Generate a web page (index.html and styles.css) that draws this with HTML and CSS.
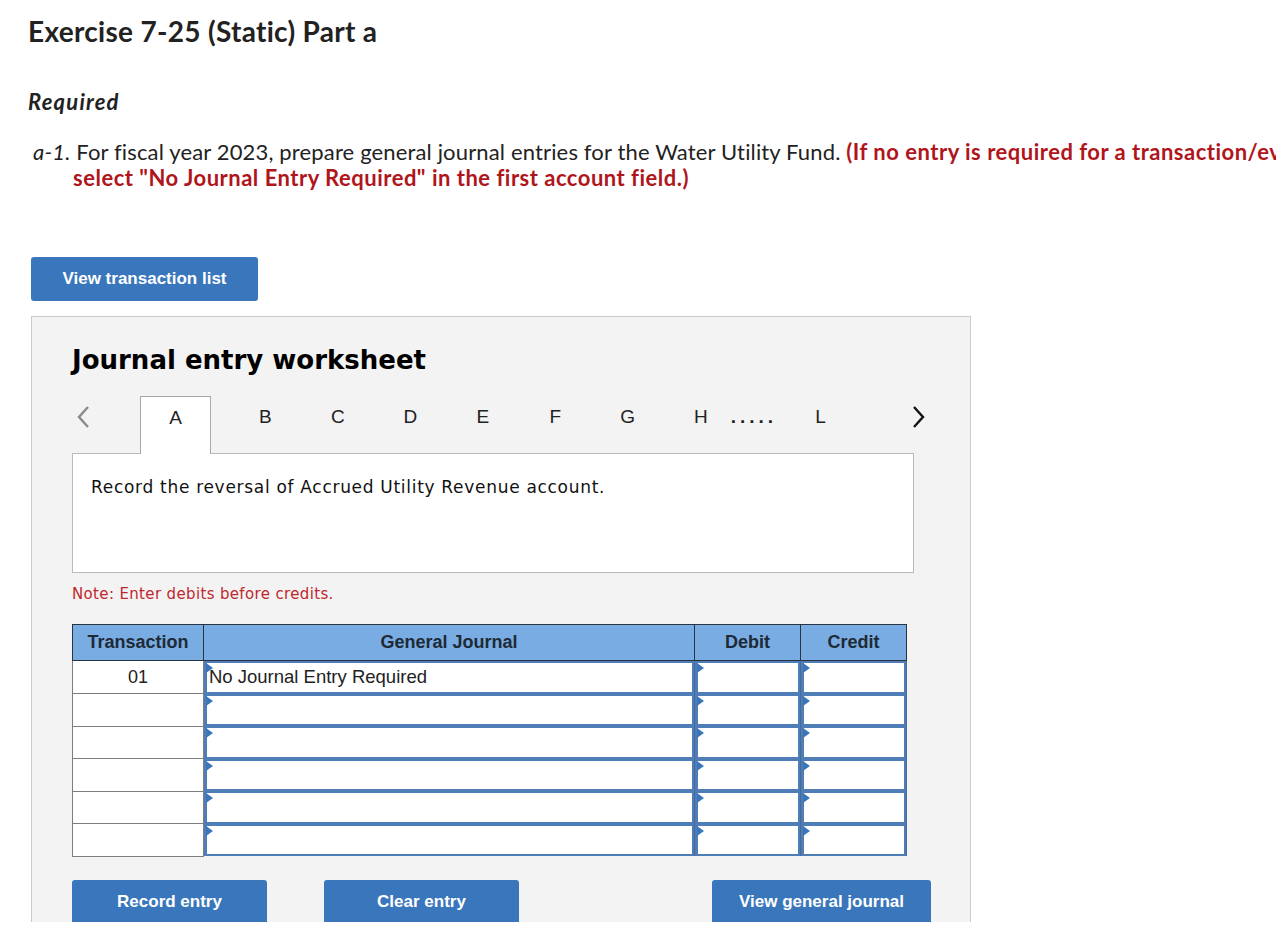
FILE: index.html
```html
<!DOCTYPE html>
<html lang="en">
<head>
    <meta charset="UTF-8">
    <meta name="viewport" content="width=device-width, initial-scale=1.0">
    <title>Exercise 7-25 (Static) Part a</title>
    <link rel="stylesheet" href="styles.css">
</head>
<body>
    <div class="page">
        <h1 class="title">Exercise 7-25 (Static) Part a</h1>

        <h2 class="required">Required</h2>
        <p class="question">
            <i>a-1.</i> For fiscal year 2023, prepare general journal entries for the Water Utility Fund. <b class="hint">(If no entry is required for a transaction/event,<br>select "No Journal Entry Required" in the first account field.)</b>
        </p>

        <button class="btn btn-list">View transaction list</button>

        <div class="worksheet">
            <h2 class="ws-title">Journal entry worksheet</h2>

            <div class="tabs">
                <span class="arrow arrow-prev">
                    <svg width="14" height="24" viewBox="0 0 14 24"><path d="M12 2 L3 12 L12 22" fill="none" stroke="#8a8a8a" stroke-width="2.4"/></svg>
                </span>
                <span class="tab active">A</span>
                <span class="tab">B</span>
                <span class="tab">C</span>
                <span class="tab">D</span>
                <span class="tab">E</span>
                <span class="tab">F</span>
                <span class="tab">G</span>
                <span class="tab tab-h">H</span>
                <span class="dots">.....</span>
                <span class="tab tab-l">L</span>
                <span class="arrow arrow-next">
                    <svg width="14" height="24" viewBox="0 0 14 24"><path d="M2 2 L11 12 L2 22" fill="none" stroke="#111" stroke-width="2.4"/></svg>
                </span>
            </div>

            <div class="desc">Record the reversal of Accrued Utility Revenue account.</div>

            <p class="note">Note: Enter debits before credits.</p>

            <table class="journal">
                <thead>
                    <tr>
                        <th class="col-tx">Transaction</th>
                        <th class="col-acct">General Journal</th>
                        <th class="col-amt">Debit</th>
                        <th class="col-amt">Credit</th>
                    </tr>
                </thead>
                <tbody>
                    <tr>
                        <td class="tx">01</td>
                        <td class="entry"><div class="field">No Journal Entry Required</div></td>
                        <td class="entry"><div class="field"></div></td>
                        <td class="entry"><div class="field"></div></td>
                    </tr>
                    <tr>
                        <td class="tx"></td>
                        <td class="entry"><div class="field"></div></td>
                        <td class="entry"><div class="field"></div></td>
                        <td class="entry"><div class="field"></div></td>
                    </tr>
                    <tr>
                        <td class="tx"></td>
                        <td class="entry"><div class="field"></div></td>
                        <td class="entry"><div class="field"></div></td>
                        <td class="entry"><div class="field"></div></td>
                    </tr>
                    <tr>
                        <td class="tx"></td>
                        <td class="entry"><div class="field"></div></td>
                        <td class="entry"><div class="field"></div></td>
                        <td class="entry"><div class="field"></div></td>
                    </tr>
                    <tr>
                        <td class="tx"></td>
                        <td class="entry"><div class="field"></div></td>
                        <td class="entry"><div class="field"></div></td>
                        <td class="entry"><div class="field"></div></td>
                    </tr>
                    <tr>
                        <td class="tx"></td>
                        <td class="entry"><div class="field"></div></td>
                        <td class="entry"><div class="field"></div></td>
                        <td class="entry"><div class="field"></div></td>
                    </tr>
                </tbody>
            </table>

            <div class="actions">
                <button class="btn btn-record">Record entry</button>
                <button class="btn btn-clear">Clear entry</button>
                <button class="btn btn-view">View general journal</button>
            </div>
        </div>
    </div>
</body>
</html>
```

FILE: styles.css
```css
body {
    margin: 0;
    background: #fff;
    color: #222;
    font-family: Lato, "Open Sans", sans-serif;
    overflow: hidden;
}
.page {
    height: 922px;
    overflow: hidden;
    padding: 0 0 0 28px;
}
.title {
    margin: 0;
    padding-top: 14px;
    font-size: 28px;
    font-weight: bold;
    line-height: 34px;
    letter-spacing: 0.3px;
    color: #222;
}
.required {
    margin: 40px 0 0;
    font-size: 22px;
    font-style: italic;
    font-weight: bold;
    line-height: 28px;
    letter-spacing: 1.2px;
}
.question {
    margin: 23px 0 0;
    padding-left: 45px;
    text-indent: -40px;
    font-size: 22px;
    line-height: 26px;
    letter-spacing: 0.15px;
    white-space: nowrap;
}
.hint {
    color: #b0151b;
    letter-spacing: 0.5px;
}
.btn {
    display: block;
    border: 0;
    border-radius: 3px;
    background: #3a76bc;
    color: #fff;
    font-family: "Liberation Sans", Arial, sans-serif;
    font-size: 17px;
    font-weight: bold;
    height: 44px;
    cursor: pointer;
}
.btn-list {
    margin: 66px 0 0 3px;
    width: 227px;
}
.worksheet {
    margin: 15px 0 0 3px;
    width: 898px;
    height: 700px;
    padding: 0 0 0 40px;
    background: #f3f3f3;
    border: 1px solid #cbcbcb;
}
.ws-title {
    margin: 0;
    padding-top: 26px;
    font-family: "DejaVu Sans", Verdana, sans-serif;
    font-size: 26px;
    font-weight: bold;
    line-height: 34px;
    color: #000;
}
.tabs {
    display: flex;
    height: 58px;
    margin-top: 19px;
    font-family: "Liberation Sans", Arial, sans-serif;
    font-size: 19px;
    line-height: 22px;
    color: #222;
}
.arrow {
    display: flex;
    padding-top: 9px;
    box-sizing: border-box;
}
.arrow-prev {
    width: 68px;
    padding-left: 4px;
}
.tab {
    width: 72.5px;
    padding-top: 10px;
    box-sizing: border-box;
    text-align: center;
}
.tab.active {
    width: 71px;
    margin-right: 18px;
    padding-top: 10px;
    background: #fff;
    border: 1px solid #a8a8a8;
    border-bottom: 0;
    position: relative;
    z-index: 1;
}
.tab-h {
    width: auto;
    margin-left: 30px;
}
.dots {
    margin-left: 23px;
    padding-top: 10px;
    font-weight: bold;
    letter-spacing: 4px;
}
.tab-l {
    width: auto;
    margin-left: 38px;
}
.arrow-next {
    margin-left: 86px;
}
.desc {
    margin-top: -1px;
    width: 842px;
    height: 120px;
    box-sizing: border-box;
    background: #fff;
    border: 1px solid #b9b9b9;
    padding: 23px 18px;
    font-family: "DejaVu Sans", Verdana, sans-serif;
    font-size: 17px;
    letter-spacing: 0.7px;
    color: #111;
}
.note {
    margin: 12px 0 0;
    font-family: "DejaVu Sans", Verdana, sans-serif;
    font-size: 15px;
    line-height: 18px;
    letter-spacing: 0.35px;
    color: #c0282d;
}
.journal {
    margin-top: 21px;
    border-collapse: collapse;
    width: 835px;
    table-layout: fixed;
    font-family: "Liberation Sans", Arial, sans-serif;
}
.journal th {
    height: 35px;
    padding: 0;
    background: #78ace3;
    border: 1px solid #2a3440;
    font-size: 18px;
    font-weight: bold;
    color: #1e2a36;
}
.col-tx {
    width: 130px;
}
.col-amt {
    width: 105px;
}
.journal td {
    padding: 0;
    background: #fff;
}
.journal td.tx {
    border: 1px solid #7d7d7d;
    text-align: center;
    font-size: 18px;
    color: #222;
}
.journal td.entry {
    border-left: 1px solid #4a6a94;
    border-right: 1px solid #4a6a94;
}
.field {
    position: relative;
    height: 32.5px;
    box-sizing: border-box;
    border: 2px solid #4f7db8;
    border-left-width: 3px;
    padding: 3px 0 0 2px;
    font-size: 18.5px;
    color: #222;
    white-space: nowrap;
}
.field::before {
    content: "";
    position: absolute;
    left: -1px;
    top: 0;
    border-top: 5px solid transparent;
    border-bottom: 5px solid transparent;
    border-left: 7px solid #3a76bc;
}
.actions {
    display: flex;
    margin-top: 23px;
}
.btn-record {
    width: 195px;
}
.btn-clear {
    width: 195px;
    margin-left: 57px;
}
.btn-view {
    width: 219px;
    margin-left: 193px;
}
```
